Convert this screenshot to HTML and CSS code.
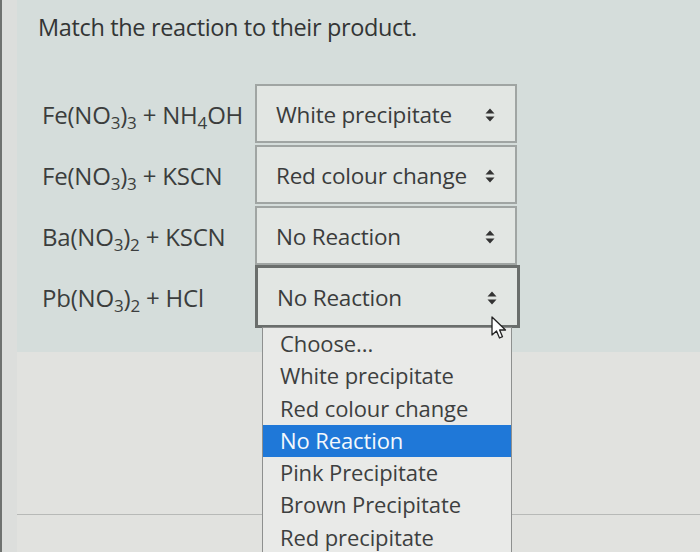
FILE: index.html
```html
<!DOCTYPE html>
<html lang="en">
<head>
<meta charset="utf-8">
<title>Match the reaction</title>
<link rel="stylesheet" href="styles.css">
</head>
<body>
<div class="screen">
  <div class="panel">
    <h1 class="prompt">Match the reaction to their product.</h1>
    <div class="pairs">
      <div class="pair">
        <span class="formula">Fe(NO<sub>3</sub>)<sub>3</sub> + NH<sub>4</sub>OH</span>
        <div class="select">
          <span class="value">White precipitate</span>
          <svg class="arrows" viewBox="0 0 10 14" width="10" height="14"><path d="M5 0.5 L9.5 5.5 H0.5 Z M0.5 8.5 H9.5 L5 13.5 Z" fill="#333"/></svg>
        </div>
      </div>
      <div class="pair">
        <span class="formula">Fe(NO<sub>3</sub>)<sub>3</sub> + KSCN</span>
        <div class="select">
          <span class="value">Red colour change</span>
          <svg class="arrows" viewBox="0 0 10 14" width="10" height="14"><path d="M5 0.5 L9.5 5.5 H0.5 Z M0.5 8.5 H9.5 L5 13.5 Z" fill="#333"/></svg>
        </div>
      </div>
      <div class="pair">
        <span class="formula">Ba(NO<sub>3</sub>)<sub>2</sub> + KSCN</span>
        <div class="select">
          <span class="value">No Reaction</span>
          <svg class="arrows" viewBox="0 0 10 14" width="10" height="14"><path d="M5 0.5 L9.5 5.5 H0.5 Z M0.5 8.5 H9.5 L5 13.5 Z" fill="#333"/></svg>
        </div>
      </div>
      <div class="pair">
        <span class="formula">Pb(NO<sub>3</sub>)<sub>2</sub> + HCl</span>
        <div class="select open">
          <span class="value">No Reaction</span>
          <svg class="arrows" viewBox="0 0 10 14" width="10" height="14"><path d="M5 0.5 L9.5 5.5 H0.5 Z M0.5 8.5 H9.5 L5 13.5 Z" fill="#333"/></svg>
          <ul class="options">
            <li>Choose...</li>
            <li>White precipitate</li>
            <li>Red colour change</li>
            <li class="current">No Reaction</li>
            <li>Pink Precipitate</li>
            <li>Brown Precipitate</li>
            <li>Red precipitate</li>
          </ul>
          <svg class="pointer" viewBox="0 0 16 24" width="16" height="24"><path d="M1 1 V19 L5.5 15 L8.5 22 L11.5 20.7 L8.6 14 H14.5 Z" fill="#fff" stroke="#222" stroke-width="1.3" stroke-linejoin="round"/></svg>
        </div>
      </div>
    </div>
  </div>
  <div class="lower">
    <div class="rule"></div>
  </div>
</div>
</body>
</html>
```

FILE: styles.css
```css
html, body {
  margin: 0;
  padding: 0;
}

body {
  width: 700px;
  height: 552px;
  overflow: hidden;
  background: #e1e2df;
  font-family: "Open Sans", "Noto Sans", sans-serif;
  color: #3a3c3c;
}

.screen {
  height: 552px;
  overflow: hidden;
  border-left: 2px solid #6f7270;
  padding-left: 15px;
  background: #dcdedc;
  display: flex;
  flex-direction: column;
}

.panel {
  height: 352px;
  flex: none;
  box-sizing: border-box;
  background: #d5dddb;
  padding: 12px 0 0 21px;
}

.prompt {
  margin: 0;
  font-size: 23.5px;
  font-weight: 400;
  line-height: 30px;
  letter-spacing: -0.35px;
  color: #333535;
}

.pairs {
  margin-top: 42px;
  display: flex;
  flex-direction: column;
}

.pair {
  display: grid;
  grid-template-columns: 217px 262px;
  align-items: start;
  height: 61px;
}

.formula {
  align-self: center;
  font-size: 24px;
  letter-spacing: -0.2px;
  padding-left: 4px;
  white-space: nowrap;
  color: #3b3d3d;
}

.formula sub {
  font-size: 17px;
  vertical-align: -5px;
  line-height: 0;
}

.select {
  position: relative;
  height: 59px;
  box-sizing: border-box;
  border: 2px solid #a0a5a3;
  background: #e2e6e3;
  display: flex;
  align-items: center;
  justify-content: space-between;
  padding: 2px 20px 0 19px;
  font-size: 22.5px;
  letter-spacing: -0.2px;
}

.select.open {
  height: 63px;
  margin-top: -2px;
  border: 3px solid #6a6e6c;
  margin-right: -3px;
  padding-top: 2px;
}

.arrows {
  flex: none;
}

.options {
  position: absolute;
  top: 59px;
  left: 4px;
  width: 250px;
  height: 226px;
  overflow: hidden;
  margin: 0;
  padding: 0;
  list-style: none;
  background: #e9eae8;
  border: 1px solid #8e908f;
  border-bottom: none;
  box-sizing: border-box;
  font-size: 22px;
  letter-spacing: -0.1px;
  z-index: 2;
}

.options li {
  height: 32.3px;
  line-height: 31px;
  padding-left: 17px;
  color: #3d3f3f;
  white-space: nowrap;
}

.options li.current {
  background: #1f78d8;
  color: #f4f8fc;
}

.pointer {
  position: absolute;
  left: 233px;
  top: 48px;
  z-index: 3;
}

.lower {
  flex: 1;
  background: #e1e2df;
  padding-top: 162px;
}

.rule {
  height: 1px;
  background: #b7b9b7;
}
```
